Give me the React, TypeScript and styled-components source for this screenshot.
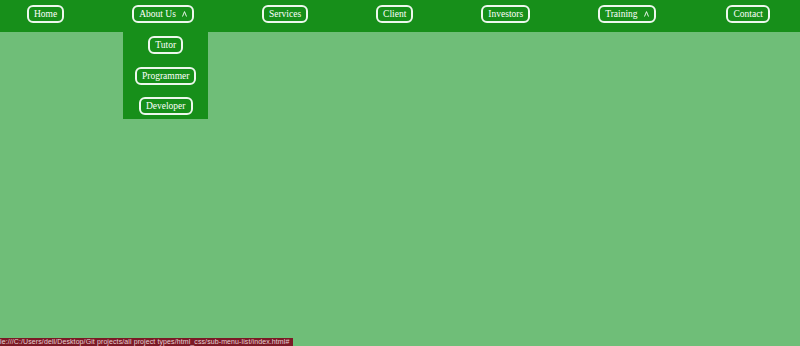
import React from 'react';
import styled, { createGlobalStyle } from 'styled-components';

const GlobalStyle = createGlobalStyle`
  html, body {
    margin: 0;
    padding: 0;
    background: #6fbe78;
    font-family: "Liberation Serif", "Times New Roman", serif;
  }
`;

const Page = styled.div`
  width: 800px;
  height: 346px;
  background: #6fbe78;
  overflow: hidden;
  position: relative;
`;

const Nav = styled.ul`
  list-style: none;
  margin: 0;
  height: 32px;
  padding: 0 30px 0 27px;
  display: flex;
  align-items: flex-start;
  gap: 68px;
  background: #178f1a;
`;

const NavItem = styled.li<{ $last?: boolean }>`
  position: relative;
  display: flex;
  align-items: flex-start;
  padding-top: 5px;
  ${(p) => (p.$last ? 'margin-left: auto;' : '')}
`;

const Pill = styled.a`
  display: flex;
  align-items: center;
  gap: 6px;
  height: 18px;
  padding: 0 5px;
  box-sizing: border-box;
  border: 2px solid #eef8ee;
  border-radius: 6px;
  color: #ffffff;
  font-size: 9.5px;
  text-decoration: none;
  white-space: nowrap;
`;

const Caret = styled.svg`
  width: 5px;
  height: 6px;
  flex-shrink: 0;
`;

const Dropdown = styled.ul`
  list-style: none;
  margin: 0;
  padding: 4px 0 4px;
  position: absolute;
  top: 32px;
  left: -9px;
  width: 85px;
  background: #178f1a;
  display: flex;
  flex-direction: column;
  align-items: center;
  gap: 12px;
`;

const SubItem = styled.li`
  display: flex;
  justify-content: center;
  &:not(:first-child) {
    margin-top: 0.5px;
  }
`;

const StatusBar = styled.div`
  position: absolute;
  left: 0;
  bottom: 0;
  height: 8px;
  width: 293px;
  background: #7b1a26;
  color: #e6d2d4;
  font-family: "Liberation Sans", Arial, sans-serif;
  font-size: 7px;
  letter-spacing: 0.1px;
  line-height: 8px;
  white-space: nowrap;
  overflow: hidden;
`;

type Item = { label: string; sub?: string[]; caret?: boolean };

const items: Item[] = [
  { label: 'Home' },
  { label: 'About Us', caret: true, sub: ['Tutor', 'Programmer', 'Developer'] },
  { label: 'Services' },
  { label: 'Client' },
  { label: 'Investors' },
  { label: 'Training', caret: true },
  { label: 'Contact' },
];

const CaretIcon = () => (
  <Caret viewBox="0 0 5 6">
    <polyline points="0.5,5.5 2.5,0.6 4.5,5.5" fill="none" stroke="#ffffff" strokeWidth="0.9" />
  </Caret>
);

export default function App() {
  return (
    <Page>
      <GlobalStyle />
      <Nav>
        {items.map((it, i) => (
          <NavItem key={it.label} $last={i === items.length - 1}>
            <Pill href="#">
              {it.label}
              {it.caret && <CaretIcon />}
            </Pill>
            {it.sub && (
              <Dropdown>
                {it.sub.map((s) => (
                  <SubItem key={s}>
                    <Pill href="#">{s}</Pill>
                  </SubItem>
                ))}
              </Dropdown>
            )}
          </NavItem>
        ))}
      </Nav>
      <StatusBar>
        le:///C:/Users/dell/Desktop/Git projects/all project types/html_css/sub-menu-list/index.html#
      </StatusBar>
    </Page>
  );
}
